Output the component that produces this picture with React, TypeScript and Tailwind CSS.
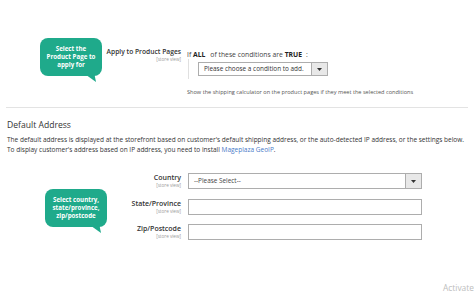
import React from "react";

const Bubble = ({ lines, className }: { lines: string[]; className: string }) => (
  <div className={`absolute ${className}`}>
    <div className="relative w-[62px] h-[38px] rounded-[8px] bg-[#1faa8b] flex flex-col items-center justify-center text-white font-bold text-[6.2px] leading-[8px] text-center whitespace-nowrap">
      {lines.map((l) => (
        <div key={l}>{l}</div>
      ))}
    </div>
    <svg className="absolute left-[42px] top-[34px]" width="16" height="12" viewBox="0 0 16 12">
      <path d="M0 0 L12 0 L14 10 Z" fill="#1faa8b" />
    </svg>
  </div>
);

const Label = ({ text }: { text: string }) => (
  <div className="w-[181px] shrink-0 text-right">
    <div className="text-[7px] leading-[8px] font-semibold text-[#333]">{text}</div>
    <div className="text-[4.6px] leading-[6px] text-[#9a9a9a]">[store view]</div>
  </div>
);

const Arrow = () => (
  <svg width="5" height="3" viewBox="0 0 5 3">
    <path d="M0 0 L5 0 L2.5 3 Z" fill="#333" />
  </svg>
);

export default function App() {
  return (
    <div
      className="relative w-[474px] h-[306px] bg-white overflow-hidden text-[#333]"
      style={{ fontFamily: '"Open Sans", sans-serif' }}
    >
      {/* Apply to product pages */}
      <div className="pt-[48px] flex">
        <div className="w-[181px] shrink-0 text-right">
          <div className="text-[6.7px] leading-[8px] font-semibold text-[#333] whitespace-nowrap">Apply to Product Pages</div>
          <div className="text-[4.6px] leading-[6px] text-[#9a9a9a]">[store view]</div>
        </div>
        <div className="ml-[6px]">
          <div className="mt-[3px] text-[6.8px] leading-[8px] text-[#444] whitespace-nowrap">
            If <b className="font-bold text-[#222]">ALL</b>
            <span className="ml-[5px]">of these conditions are </span>
            <b className="font-bold text-[#222]">TRUE</b>
            <span className="ml-[4px]">:</span>
          </div>
          <div className="ml-[1px] border-l border-[#e0e0e0] pl-[9px] py-[3px]">
            <div className="w-[130px] h-[14px] border border-[#adadad] flex bg-white">
              <div className="flex-1 px-[5px] text-[6.4px] leading-[12px] text-[#333] whitespace-nowrap">
                Please choose a condition to add.
              </div>
              <div className="w-[16px] bg-[#e8e8e8] border-l border-[#adadad] flex items-center justify-center">
                <Arrow />
              </div>
            </div>
          </div>
          <div className="mt-[10px] text-[5.6px] leading-[7px] text-[#555] whitespace-nowrap">
            Show the shipping calculator on the product pages if they meet the selected conditions
          </div>
        </div>
      </div>

      <div className="mt-[11px] mx-[6px] border-t border-[#e3e3e3]" />

      <div className="px-[7px]">
        <div className="mt-[12px] text-[8.6px] leading-[10px] text-[#333]">Default Address</div>
        <div className="mt-[5px] text-[6.5px] leading-[10px] text-[#333] whitespace-nowrap">
          <div>
            The default address is displayed at the storefront based on customer's default shipping address, or the auto-detected IP address, or the settings below.
          </div>
          <div>
            To display customer's address based on IP address, you need to install{" "}
            <span className="text-[#4a7bc8]">Mageplaza GeoIP</span>.
          </div>
        </div>
      </div>

      {/* Form rows */}
      <div className="mt-[18px] flex flex-col gap-[9.5px]">
        <div className="flex items-start">
          <div className="pt-[1px]">
            <Label text="Country" />
          </div>
          <div className="ml-[7px] w-[234px] h-[16px] border border-[#adadad] flex">
            <div className="flex-1 px-[5px] text-[6.4px] leading-[14px] text-[#444]">--Please Select--</div>
            <div className="w-[16px] bg-[#e8e8e8] border-l border-[#adadad] flex items-center justify-center">
              <Arrow />
            </div>
          </div>
        </div>
        <div className="flex items-start">
          <div className="pt-[1px]">
            <Label text="State/Province" />
          </div>
          <div className="ml-[7px] w-[234px] h-[16px] border border-[#adadad]" />
        </div>
        <div className="flex items-start">
          <div className="pt-[1px]">
            <Label text="Zip/Postcode" />
          </div>
          <div className="ml-[7px] w-[234px] h-[16px] border border-[#adadad]" />
        </div>
      </div>

      <Bubble lines={["Select the", "Product Page to", "apply for"]} className="left-[40px] top-[38px]" />
      <Bubble lines={["Select country,", "state/province,", "zip/postcode"]} className="left-[45px] top-[189px]" />

      <div className="absolute left-[443px] top-[283px] text-[8.4px] leading-[10px] text-[#bdbdbd] whitespace-nowrap">
        Activate
      </div>
    </div>
  );
}
